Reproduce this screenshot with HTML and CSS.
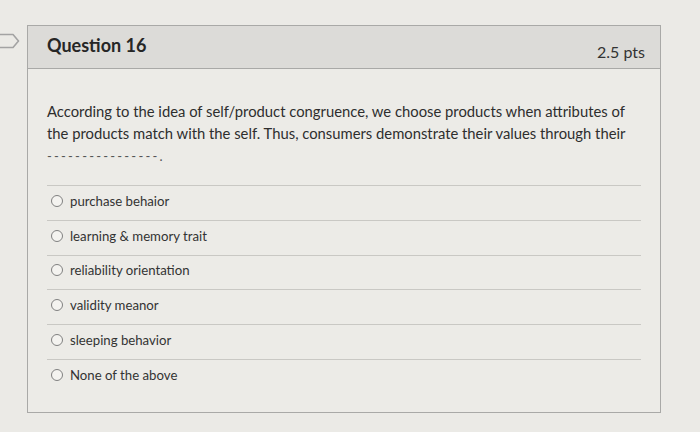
FILE: index.html
```html
<!DOCTYPE html>
<html>
<head>
<meta charset="utf-8">
<link rel="stylesheet" href="styles.css">
</head>
<body>
<div class="page">
  <div class="flag">
    <svg width="20" height="16" viewBox="0 0 20 16"><path d="M-1 1.5 H13 L18.5 8 L13 14.5 H-1" fill="none" stroke="#a3a3a3" stroke-width="1.6" stroke-linejoin="round"/></svg>
  </div>
  <div class="card">
    <div class="card-header">
      <span class="q-title">Question 16</span>
      <span class="q-pts">2.5 pts</span>
    </div>
    <div class="card-body">
      <p class="q-text">According to the idea of self/product congruence, we choose products when attributes of the products match with the self. Thus, consumers demonstrate their values through their</p>
      <p class="q-blank">----------------.</p>
      <ul class="answers">
        <li class="answer"><span class="radio"></span>purchase behaior</li>
        <li class="answer"><span class="radio"></span>learning &amp; memory trait</li>
        <li class="answer"><span class="radio"></span>reliability orientation</li>
        <li class="answer"><span class="radio"></span>validity meanor</li>
        <li class="answer"><span class="radio"></span>sleeping behavior</li>
        <li class="answer last"><span class="radio"></span>None of the above</li>
      </ul>
    </div>
  </div>
</div>
</body>
</html>
```
FILE: styles.css
```css
html, body {
  margin: 0;
  padding: 0;
}
body {
  width: 700px;
  height: 432px;
  background: #ebeae6;
  font-family: Lato, "Open Sans", sans-serif;
  overflow: hidden;
}
.page {
  display: flex;
  align-items: flex-start;
  padding-top: 25px;
}
.flag {
  width: 27px;
  padding-top: 8px;
  flex: none;
}
.flag svg {
  display: block;
}
.card {
  width: 632px;
  height: 386px;
  border: 1px solid #a9a9a7;
  background: #ecebe7;
  display: flex;
  flex-direction: column;
}
.card-header {
  height: 42px;
  background: #dcdbd8;
  border-bottom: 1px solid #a9a9a7;
  display: flex;
  align-items: center;
  justify-content: space-between;
  padding: 0 15px 0 19px;
}
.q-title {
  font-size: 18px;
  font-weight: 700;
  color: #262626;
  margin-top: -4px;
}
.q-pts {
  font-size: 16px;
  color: #333;
  margin-top: 8px;
}
.card-body {
  padding: 0 19px;
}
.q-text {
  margin: 31px 0 0;
  font-size: 14.8px;
  line-height: 22px;
  color: #2e2e2e;
}
.q-blank {
  margin: 0;
  font-size: 13px;
  line-height: 24px;
  letter-spacing: 2.2px;
  color: #555;
  height: 41px;
}
.answers {
  list-style: none;
  margin: 0;
  padding: 0;
  border-top: 1px solid #c9c8c4;
}
.answer {
  border-bottom: 1px solid #c9c8c4;
  display: flex;
  align-items: center;
  font-size: 13.2px;
  color: #333;
  padding-left: 4px;
  padding-bottom: 4px;
  box-sizing: border-box;
  height: 34.8px;
}
.answer.last {
  border-bottom: none;
}
.radio {
  width: 10px;
  height: 10px;
  border: 1.3px solid #808080;
  border-radius: 50%;
  background: #f4f3f0;
  margin-right: 7px;
  flex: none;
}
```
